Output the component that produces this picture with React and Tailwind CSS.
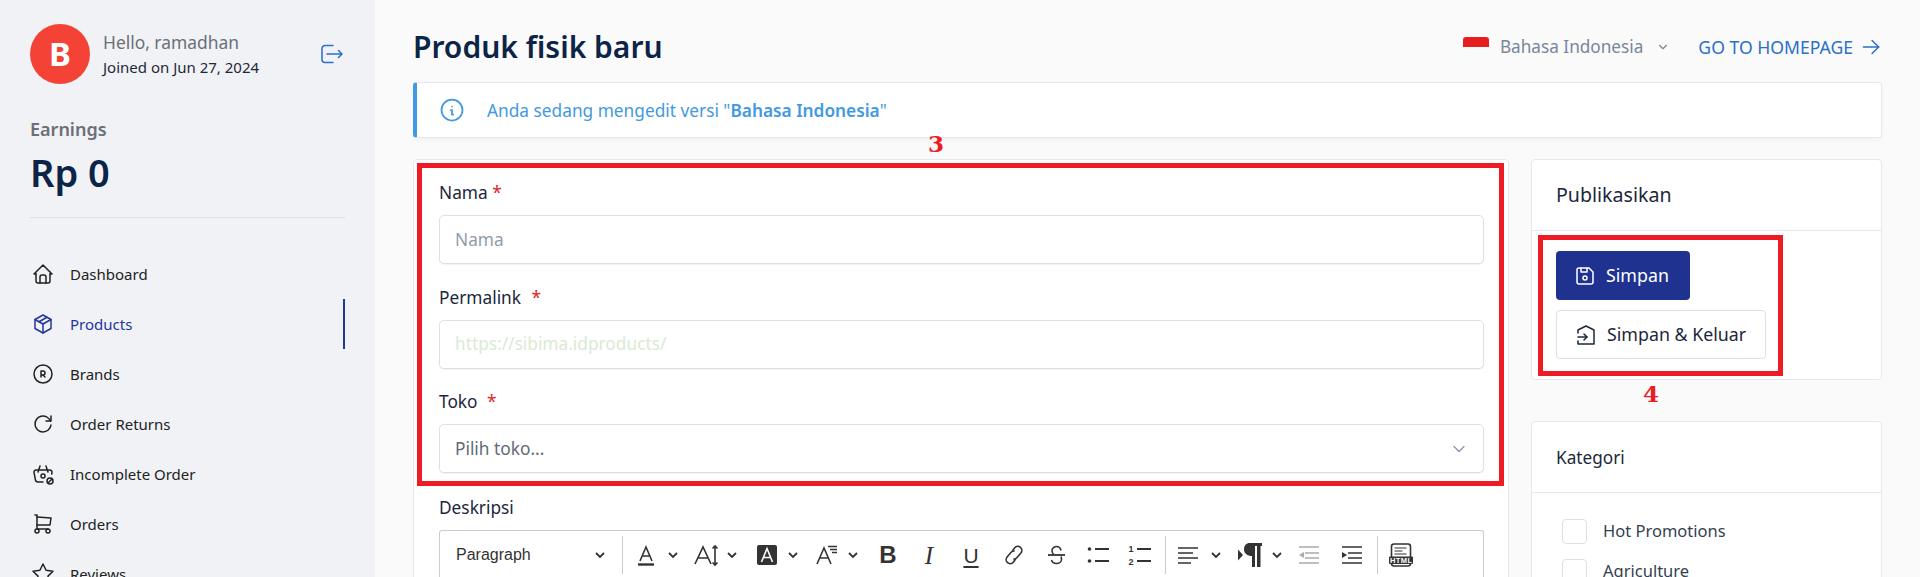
import React from "react";
import {
  TbHome,
  TbPackage,
  TbRegistered,
  TbReload,
  TbBasketCancel,
  TbShoppingCart,
  TbStar,
  TbInfoCircle,
  TbChevronDown,
  TbArrowRight,
  TbDeviceFloppy,
  TbTransferIn,
} from "react-icons/tb";

const navItems = [
  { label: "Dashboard", Icon: TbHome },
  { label: "Products", Icon: TbPackage, active: true },
  { label: "Brands", Icon: TbRegistered },
  { label: "Order Returns", Icon: TbReload },
  { label: "Incomplete Order", Icon: TbBasketCancel },
  { label: "Orders", Icon: TbShoppingCart },
  { label: "Reviews", Icon: TbStar },
];

const Caret = ({ className = "" }) => (
  <svg viewBox="0 0 10 10" className={`w-[10px] h-[10px] shrink-0 ${className}`} fill="none" stroke="#333" strokeWidth="1.8">
    <path d="M1 3 5 7l4-4" />
  </svg>
);

const Ico = ({ className = "", children }) => (
  <svg viewBox="0 0 24 24" className={`w-[24px] h-[24px] shrink-0 ${className}`} fill="none" stroke="#333" strokeWidth="1.6">
    {children}
  </svg>
);

const Sep = ({ className = "" }) => <span className={`w-px h-[38px] bg-[#ccc] shrink-0 ${className}`} />;

const Field = ({ label, gap, children }) => (
  <div>
    <label className="block h-[21px] leading-[21px] text-[17.3px] text-[#1d273b] mb-[12px]">
      {label}
      <span className={`text-[#e02424] ${gap}`}>*</span>
    </label>
    {children}
  </div>
);

const boxCls =
  "h-[49px] rounded-[5px] border border-[#dce0e8] bg-white shadow-[0_1px_1px_rgba(24,36,51,0.06)] flex items-center px-[15px] text-[17.3px]";

const Toolbar = () => (
  <div className="h-[50px] border border-[#ccc] border-b-0 rounded-t-[3px] bg-white flex items-center pl-[16px]">
    <span className="w-[139px] text-[16px] text-[#333] font-['Liberation_Sans',sans-serif]">Paragraph</span>
    <Caret />
    <Sep className="ml-[17px]" />
    <Ico className="ml-[11px]">
      <path d="M6 18 12 4l6 14M8 13h8" />
      <path d="M4 21.500h16" strokeWidth="2.4" />
    </Ico>
    <Caret className="ml-[10px]" />
    <svg viewBox="0 0 30 24" className="ml-[13px] w-[30px] h-[24px] shrink-0" fill="none" stroke="#333" strokeWidth="1.6">
      <path d="M4 21 12 4l8 17M7 15h10" />
      <path d="M24 3v19M21.500 5.500 24 3l2.500 2.500M21.500 19.500 24 22l2.500-2.500" />
    </svg>
    <Caret className="ml-[6px]" />
    <div className="ml-[20px] w-[20px] h-[20px] bg-[#333] rounded-[2px] flex items-center justify-center shrink-0">
      <svg viewBox="0 0 20 20" className="w-[20px] h-[20px]" fill="none" stroke="#fff" strokeWidth="1.6">
        <path d="M4.500 17 10 3.500 15.500 17M6.500 12.500h7" />
      </svg>
    </div>
    <Caret className="ml-[11px]" />
    <Ico className="ml-[17px]">
      <path d="M2 21 9 5l7 16M5 15h8" />
      <path d="M13 3.500h9M15 6.500h7M17 9.500h5" strokeWidth="1.4" />
    </Ico>
    <Caret className="ml-[9px]" />
    <div className="ml-[18px] w-[24px] shrink-0 text-center text-[24px] font-bold leading-none text-[#333] font-['Liberation_Sans',sans-serif]">B</div>
    <div className="ml-[17px] w-[24px] shrink-0 text-center text-[25px] italic leading-none text-[#333] font-['Liberation_Serif',serif]">I</div>
    <div className="ml-[18px] w-[24px] shrink-0 text-center text-[21px] leading-none text-[#333] underline decoration-[2px] underline-offset-[3px] font-['Liberation_Sans',sans-serif]">U</div>
    <Ico className="ml-[19px]">
      <g transform="rotate(40 12 12)">
        <path d="M8 10V6a4 4 0 0 1 8 0v6a4 4 0 0 1-2 3.500" />
        <path d="M16 14v4a4 4 0 0 1-8 0v-6a4 4 0 0 1 2-3.500" />
      </g>
    </Ico>
    <Ico className="ml-[19px]">
      <path d="M3 12h17" strokeWidth="1.8" />
      <path d="M16 7.500c-.5-2.500-2.500-4-4.500-4S7 5 7 7.500c0 2 1 3.500 2 4" />
      <path d="M16 13.500c.5 1 .5 2 .5 3 0 2.500-2.500 4-5 4S7 19 6.500 17" />
    </Ico>
    <Ico className="ml-[17px]">
      <circle cx="3.500" cy="6" r="1.8" fill="#333" stroke="none" />
      <circle cx="3.500" cy="18" r="1.8" fill="#333" stroke="none" />
      <path d="M9 6h14M9 18h14" strokeWidth="2" />
    </Ico>
    <svg viewBox="0 0 24 24" className="ml-[18px] w-[24px] h-[24px] shrink-0" fill="none" stroke="#333" strokeWidth="2">
      <path d="M9 6h14M9 18h14" />
      <text x="3" y="9" textAnchor="middle" fontSize="9" fontWeight="700" fill="#333" stroke="none" fontFamily="Liberation Sans">1</text>
      <text x="3" y="22" textAnchor="middle" fontSize="9" fontWeight="700" fill="#333" stroke="none" fontFamily="Liberation Sans">2</text>
    </svg>
    <Sep className="ml-[13px]" />
    <Ico className="ml-[10px]">
      <path d="M2 5h20M2 10h15M2 15h20M2 20h13" strokeWidth="1.7" />
    </Ico>
    <Caret className="ml-[11px]" />
    <svg viewBox="0 0 30 24" className="ml-[14px] w-[30px] h-[24px] shrink-0" fill="#333">
      <path d="M3 6.500v11l5-5.500z" />
      <path d="M15 0h12v3h-1.500v21H22V3h-2v21h-3V13c-4.500 0-8-2.500-8-6.500S11 0 15 0z" />
    </svg>
    <Caret className="ml-[7px]" />
    <Ico className="ml-[15px]">
      <path d="M2 4h20M8 10h14M8 15h14M2 20h20" stroke="#aaa" strokeWidth="1.7" />
      <path d="M7 9v6l-5-3z" fill="#aaa" stroke="none" />
    </Ico>
    <Ico className="ml-[19px]">
      <path d="M2 4h20M8 10h14M8 15h14M2 20h20" strokeWidth="1.7" />
      <path d="M2 9v6l5-3z" fill="#333" stroke="none" />
    </Ico>
    <Sep className="ml-[13px]" />
    <svg viewBox="0 0 24 24" className="ml-[11px] w-[24px] h-[24px] shrink-0" fill="none" stroke="#333" strokeWidth="1.6">
      <rect x="2.500" y="1" width="19" height="22" rx="2.500" />
      <path d="M5.500 5h12M5.500 8h8M5.500 11h12" strokeWidth="1.2" />
      <rect x="0" y="13.500" width="24" height="7.500" rx="1" fill="#333" stroke="none" />
      <text x="12" y="20" textAnchor="middle" fontSize="7.500" fontWeight="700" fill="#fff" stroke="none" fontFamily="Liberation Sans" textLength="22">HTML</text>
    </svg>
  </div>
);

export default function App() {
  return (
    <div className="w-full h-[577px] overflow-hidden flex bg-[#fafafa] font-['Noto_Sans',sans-serif] relative">
      {/* Sidebar */}
      <aside className="w-[375px] shrink-0 bg-[#f1f2f6] pl-[30px] pr-[30px] pt-[24px]">
        <div className="flex items-center">
          <div className="w-[60px] h-[60px] rounded-full bg-[#f44336] flex items-center justify-center text-white text-[33px] font-bold">
            B
          </div>
          <div className="ml-[13px] flex-1">
            <div className="text-[17.4px] leading-[24px] text-[#6b6f78]">Hello, ramadhan</div>
            <div className="text-[15px] leading-[22px] mt-[2px] text-[#1f2937]">Joined on Jun 27, 2024</div>
          </div>
          <svg viewBox="0 0 22 20" className="w-[22px] h-[20px] mr-[2px]" fill="none" stroke="#2b70c9" strokeWidth="1.5" strokeLinecap="round" strokeLinejoin="round">
            <path d="M12 1.500H4a3 3 0 0 0-3 3v11a3 3 0 0 0 3 3h8" />
            <path d="M6 10h15M17.500 6.500 21 10l-3.500 3.500" />
          </svg>
        </div>
        <div className="mt-[32px] text-[18px] leading-[26px] font-semibold text-[#6b6f78]">Earnings</div>
        <div className="mt-[5px] text-[38px] leading-[50px] font-semibold text-[#0b2447]">Rp 0</div>
        <div className="mt-[20px] h-px bg-[#dcdfe5]" />
        <nav className="mt-[31px]">
          {navItems.map(({ label, Icon, active }) => (
            <div
              key={label}
              className={`h-[50px] flex items-center ${active ? "border-r-2 border-[#1f3a9e] text-[#26349c]" : "text-[#222]"}`}
            >
              <Icon size={24} strokeWidth={1.5} className="w-[24px] ml-[1px] shrink-0" />
              <span className="ml-[15px] text-[15px]">{label}</span>
            </div>
          ))}
        </nav>
      </aside>

      {/* Main */}
      <main className="flex-1 min-w-0 pl-[38px] pr-[38px]">
        <div className="h-[82px] pt-[12px] flex items-center justify-between">
          <h1 className="text-[30px] font-semibold text-[#0b2447] leading-none">Produk fisik baru</h1>
          <div className="flex items-center">
            <span className="w-[26px] h-[20px] rounded-[3px] overflow-hidden flex flex-col">
              <span className="h-[10px] bg-[#e61e1e]" />
              <span className="h-[10px] bg-[#f8fbfb]" />
            </span>
            <span className="ml-[11px] text-[17.2px] text-[#78869c]">Bahasa Indonesia</span>
            <TbChevronDown size={14} className="ml-[13px] text-[#78869c]" />
            <a className="ml-[28px] text-[17.6px] text-[#2b70c9]">GO TO HOMEPAGE</a>
            <TbArrowRight size={26} strokeWidth={1.4} className="ml-[5px] -mr-[2px] text-[#2b70c9]" />
          </div>
        </div>

        <div className="h-[56px] bg-white rounded-[4px] border border-[#e6e8ef] border-l-4 border-l-[#3f9ae5] shadow-[0_2px_4px_rgba(24,36,51,0.04)] flex items-center pl-[21px] text-[17.3px] text-[#4299e1]">
          <TbInfoCircle size={28} strokeWidth={1.5} className="shrink-0" />
          <span className="ml-[21px] mt-[2px]">
            Anda sedang mengedit versi "<b className="font-semibold">Bahasa Indonesia</b>"
          </span>
        </div>

        <div className="mt-[21px] flex gap-[22px] items-start">
          <div className="flex-1 min-w-0 h-[500px] bg-white border border-[#e6e8ef] rounded-[4px] pl-[25px] pr-[24px] pt-[22px]">
            <div className="flex flex-col gap-[22.5px]">
              <Field label="Nama " gap="">
                <div className={`${boxCls} text-[#929bab]`}>Nama</div>
              </Field>
              <Field label="Permalink " gap="ml-[6px]">
                <div className={`${boxCls} text-[#d9ead3]`}>https://sibima.idproducts/</div>
              </Field>
              <Field label="Toko " gap="ml-[5px]">
                <div className={`${boxCls} justify-between text-[#626976]`}>
                  <span>Pilih toko...</span>
                  <TbChevronDown size={20} strokeWidth={1.5} className="text-[#8a95a8] -mr-[1px]" />
                </div>
              </Field>
            </div>
            <div className="mt-[24px] h-[21px] leading-[21px] text-[17.3px] text-[#1d273b] mb-[11.5px]">Deskripsi</div>
            <Toolbar />
          </div>

          <div className="w-[351px] shrink-0 flex flex-col gap-[41px]">
            <div className="h-[221px] bg-white border border-[#e6e8ef] rounded-[4px]">
              <div className="h-[71px] border-b border-[#e6e8ef] flex items-center pl-[24px] text-[19.6px] text-[#1d273b]">Publikasikan</div>
              <div className="pl-[24px] pt-[20px]">
                <button className="w-[134px] h-[49px] rounded-[4px] bg-[#203290] text-white text-[17.8px] flex items-center pl-[17px]">
                  <TbDeviceFloppy size={24} strokeWidth={1.5} />
                  <span className="ml-[9px]">Simpan</span>
                </button>
                <button className="mt-[10px] w-[210px] h-[49px] rounded-[4px] bg-white border border-[#dce0e8] text-[#1d273b] text-[17.8px] flex items-center pl-[17px]">
                  <TbTransferIn size={24} strokeWidth={1.5} />
                  <span className="ml-[9px]">Simpan &amp; Keluar</span>
                </button>
              </div>
            </div>
            <div className="h-[200px] bg-white border border-[#e6e8ef] rounded-[4px]">
              <div className="h-[71px] border-b border-[#e6e8ef] flex items-center pl-[24px] pt-[2px] text-[17.2px] text-[#1d273b]">Kategori</div>
              <div className="pl-[30px] pt-[26px] flex flex-col gap-[16px] text-[16.5px] text-[#343f50]">
                {["Hot Promotions", "Agriculture"].map((c) => (
                  <div key={c} className="flex items-center h-[24px]">
                    <span className="w-[25px] h-[25px] rounded-[4px] border border-[#dce0e8] bg-white" />
                    <span className="ml-[16px]">{c}</span>
                  </div>
                ))}
              </div>
            </div>
          </div>
        </div>
      </main>

      {/* Red annotation boxes, drawn over the page */}
      <div className="absolute left-[417px] top-[163px] w-[1087px] h-[323px] border-[5px] border-[#ed1c24]" />
      <div className="absolute left-[1538px] top-[235px] w-[245px] h-[141px] border-[5px] border-[#ed1c24]" />
      <span className="absolute left-[928px] top-[130px] text-[23px] leading-[28px] font-bold text-[#ed1c24] font-['DejaVu_Serif',serif]">3</span>
      <span className="absolute left-[1643px] top-[380px] text-[23px] leading-[28px] font-bold text-[#ed1c24] font-['DejaVu_Serif',serif]">4</span>
    </div>
  );
}
